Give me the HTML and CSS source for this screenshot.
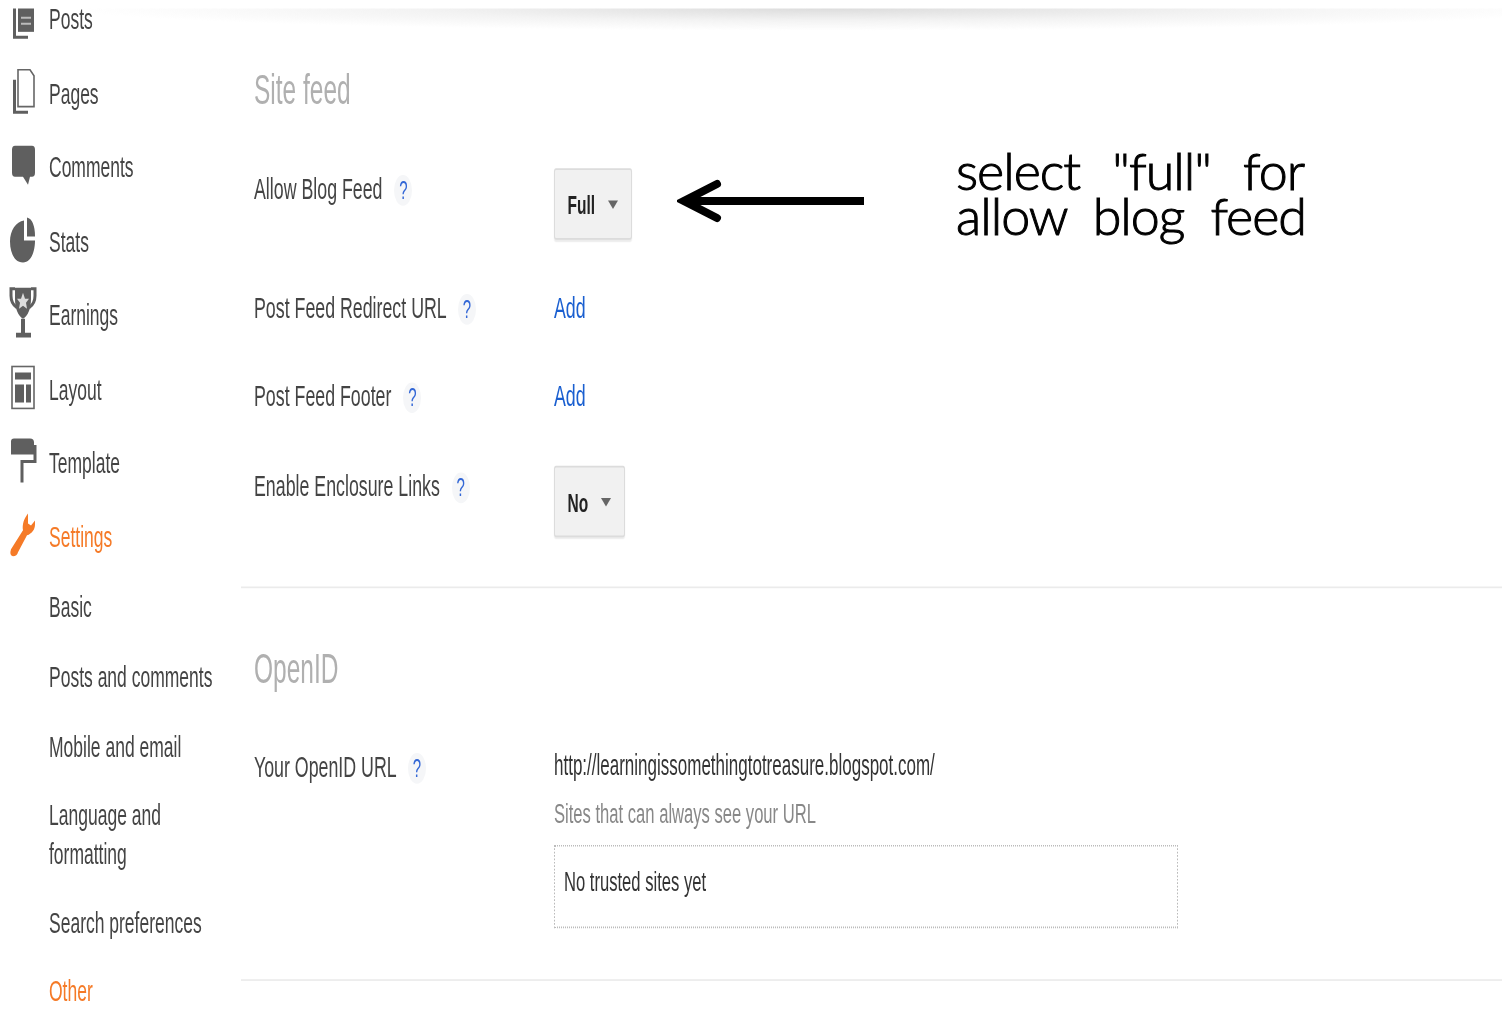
FILE: index.html
```html
<!DOCTYPE html>
<html lang="en">
<head>
    <meta charset="UTF-8">
    <title>Blogger - Site feed settings</title>
    <link rel="stylesheet" href="styles.css">
</head>
<body>
    <div class="page">
        <div class="topbar"></div>
        <div class="columns">
            <nav class="sidebar">
                <a class="nav-item">
                    <svg class="icon" viewBox="0 0 30 48" preserveAspectRatio="none"><path d="M5 10V44H20V41H8V10Z"/><rect x="10" y="0" width="16" height="37"/><path d="M13 23H23M13 29H23" class="cut"/></svg>
                    Posts
                </a>
                <a class="nav-item">
                    <svg class="icon" viewBox="0 0 30 48" preserveAspectRatio="none"><path d="M5 10V44H20V41H8V10Z"/><path d="M10 0H22L26 6V37H10Z" class="line"/></svg>
                    Pages
                </a>
                <a class="nav-item">
                    <svg class="icon" viewBox="0 0 30 48" preserveAspectRatio="none"><path d="M7 3H24Q27 3 27 7V30Q27 34 24 34H22L20 42L15 34H7Q4 34 4 30V7Q4 3 7 3Z"/></svg>
                    Comments
                </a>
                <a class="nav-item">
                    <svg class="icon" viewBox="0 0 30 48" preserveAspectRatio="none"><path d="M16 3V23H27C27 36 22 45 15 45C7 45 2 36 2 24C2 13 8 4 16 3Z"/><path d="M19 0C24 1 27 8 27 19H19Z"/></svg>
                    Stats
                </a>
                <a class="nav-item">
                    <svg class="icon" viewBox="0 0 30 48" preserveAspectRatio="none"><path d="M7 -3H23V8C23 18 20 25 15 28C10 25 7 18 7 8Z"/><path d="M13 28H17V42H13ZM8 42H23V47H8Z"/><path d="M7 -2H3V5C3 11 6 15 9 17M23 -2H27V5C27 11 24 15 21 17" class="handle"/><path d="M15 2L17 8H21L18 12L19 18L15 15L11 18L12 12L9 8H13Z" class="star"/></svg>
                    Earnings
                </a>
                <a class="nav-item">
                    <svg class="icon" viewBox="0 0 30 48" preserveAspectRatio="none"><rect x="4" y="1" width="22" height="42" class="line"/><path d="M7 7H23V14H7ZM7 19H16V37H7ZM18 19H23V37H18Z"/></svg>
                    Layout
                </a>
                <a class="nav-item">
                    <svg class="icon" viewBox="0 0 30 48" preserveAspectRatio="none"><path d="M3 3Q3 0 6 0H22Q26 0 26 4V16H3Z"/><path d="M26 8H27V23H14V44" class="handle"/></svg>
                    Template
                </a>
                <a class="nav-item active">
                    <svg class="icon" viewBox="0 0 30 48" preserveAspectRatio="none"><path d="M20 0C16 5 14 11 15 17L3 36Q1 42 5 43Q9 43 10 39L19 22C24 20 27 16 27 11V7L23 12L20 10Z"/></svg>
                    Settings
                </a>
                <ul class="sub-nav">
                    <li>Basic</li>
                    <li>Posts and comments</li>
                    <li>Mobile and email</li>
                    <li>Language and formatting</li>
                    <li>Search preferences</li>
                    <li class="active">Other</li>
                </ul>
            </nav>

            <main class="main">
                <section class="section">
                    <h2>Site feed</h2>
                    <div class="row row-first">
                        <div class="label">Allow Blog Feed <span class="help">?</span></div>
                        <button class="select">Full <span class="caret"></span></button>
                    </div>
                    <div class="row">
                        <div class="label">Post Feed Redirect URL <span class="help">?</span></div>
                        <a class="link">Add</a>
                    </div>
                    <div class="row">
                        <div class="label">Post Feed Footer <span class="help">?</span></div>
                        <a class="link">Add</a>
                    </div>
                    <div class="row">
                        <div class="label">Enable Enclosure Links <span class="help">?</span></div>
                        <button class="select">No <span class="caret"></span></button>
                    </div>
                </section>

                <section class="section section-openid">
                    <h2>OpenID</h2>
                    <div class="row row-first">
                        <div class="label">Your OpenID URL <span class="help">?</span></div>
                        <div class="value">
                            <div class="url">http://learningissomethingtotreasure.blogspot.com/</div>
                            <div class="hint">Sites that can always see your URL</div>
                            <div class="trusted">No trusted sites yet</div>
                        </div>
                    </div>
                </section>
            </main>
        </div>
    </div>

    <!-- note pasted over the screenshot -->
    <svg class="arrow" viewBox="0 0 200 50"><path d="M14 25H187" class="shaft"/><path d="M40 8L7 25L40 42" class="head"/></svg>
    <div class="note"><span class="note-top">select "full" for</span><br>allow blog feed</div>
</body>
</html>
```

FILE: styles.css
```css
html, body {
    margin: 0;
    height: 1033px;
    overflow: hidden;
    background: #fff;
}
/* the whole screenshot is stretched tall, so lay out flat and stretch it */
.page {
    width: 1502px;
    height: 608px;
    transform: scaleY(1.7);
    transform-origin: 0 0;
    font-family: "Liberation Sans", Arial, sans-serif;
    font-size: 17.8px;
    line-height: 24px;
    color: #444;
    overflow: hidden;
    filter: blur(0.35px);
}
.topbar {
    position: relative;
    z-index: 2;
    height: 4.7px;
    background: #fff;
}
.topbar::after {
    content: "";
    position: absolute;
    left: 0;
    right: 0;
    top: 100%;
    height: 13px;
    background: radial-gradient(ellipse 50% 100% at 55% 0, #dcdcdc, rgba(235, 235, 235, 0.6) 55%, rgba(255, 255, 255, 0) 100%);
}
.columns {
    display: flex;
}
.sidebar {
    flex: none;
    width: 241px;
    margin-top: -15px;
    font-size: 17.5px;
}
.nav-item {
    display: flex;
    align-items: center;
    gap: 11px;
    height: 43.5px;
    padding-left: 8px;
}
.nav-item.active {
    color: #f57a27;
}
.icon {
    flex: none;
    width: 30px;
    height: 28.2px;
    overflow: visible;
    fill: #5f5f5f;
}
.active .icon {
    fill: #f57a27;
}
.icon .line {
    fill: none;
    stroke: #666;
    stroke-width: 1.6;
}
.icon .cut {
    fill: none;
    stroke: #bbb;
    stroke-width: 2;
}
.icon .handle {
    fill: none;
    stroke: #5f5f5f;
    stroke-width: 3;
}
.icon .star {
    fill: #ddd;
}
.sub-nav {
    list-style: none;
    margin: 0;
    padding: 0 0 0 49px;
    line-height: 23px;
}
.sub-nav li {
    width: 172px;
    padding: 8.8px 0;
}
.sub-nav li.active {
    color: #f57a27;
}
.main {
    flex: 1;
}
.section {
    padding: 33.8px 0 29px 13px;
    border-bottom: 1.5px solid #ebebeb;
}
.section-openid {
    padding-top: 32.9px;
}
h2 {
    margin: 0;
    font-size: 24.5px;
    font-weight: normal;
    line-height: 30px;
    color: #b0b0b0;
}
.row {
    display: flex;
    align-items: flex-start;
    margin-top: 28.3px;
}
.row-first {
    margin-top: 30.3px;
    margin-bottom: 0.6px;
}
.label {
    flex: none;
    width: 300px;
    color: #444;
}
.help {
    display: inline-block;
    width: 18px;
    height: 18px;
    margin-left: 7px;
    border-radius: 50%;
    background: #f5f6f8;
    color: #3367d6;
    font-size: 15px;
    line-height: 18px;
    text-align: center;
}
.link {
    padding-top: 1px;
    line-height: 23px;
    color: #1a5fd0;
}
.select {
    display: flex;
    align-items: center;
    height: 42px;
    padding: 2px 12.5px 0;
    border: 1px solid #dcdcdc;
    border-radius: 2px;
    background: #f1f1f1;
    box-shadow: 0 1px 1px rgba(0, 0, 0, 0.08);
    font-family: inherit;
    font-size: 15.5px;
    font-weight: bold;
    color: #222;
}
.caret {
    width: 0;
    height: 0;
    margin-left: 13px;
    border-left: 5px solid transparent;
    border-right: 5px solid transparent;
    border-top: 5px solid #666;
}
.value {
    flex: none;
    width: 624px;
}
.url {
    color: #333;
    font-size: 17px;
}
.hint {
    margin-top: 4.5px;
    color: #888;
    font-size: 16.6px;
}
.trusted {
    box-sizing: border-box;
    height: 49px;
    margin-top: 5.7px;
    padding: 9px;
    border: 1px dotted #bbb;
    color: #333;
    font-size: 16.6px;
}
.arrow {
    position: absolute;
    left: 677px;
    top: 176px;
    width: 200px;
    height: 50px;
}
.shaft {
    fill: none;
    stroke: #000;
    stroke-width: 8;
}
.head {
    fill: none;
    stroke: #000;
    stroke-width: 8;
    stroke-linecap: round;
    stroke-linejoin: miter;
}
.note {
    position: absolute;
    left: 956px;
    top: 148px;
    font-family: Lato, "Liberation Sans", sans-serif;
    font-size: 52px;
    font-weight: 300;
    line-height: 45px;
    letter-spacing: -1px;
    word-spacing: 13px;
    white-space: nowrap;
    color: #000;
    -webkit-text-stroke: 1px #000;
}
.note-top {
    word-spacing: 19px;
}
```
